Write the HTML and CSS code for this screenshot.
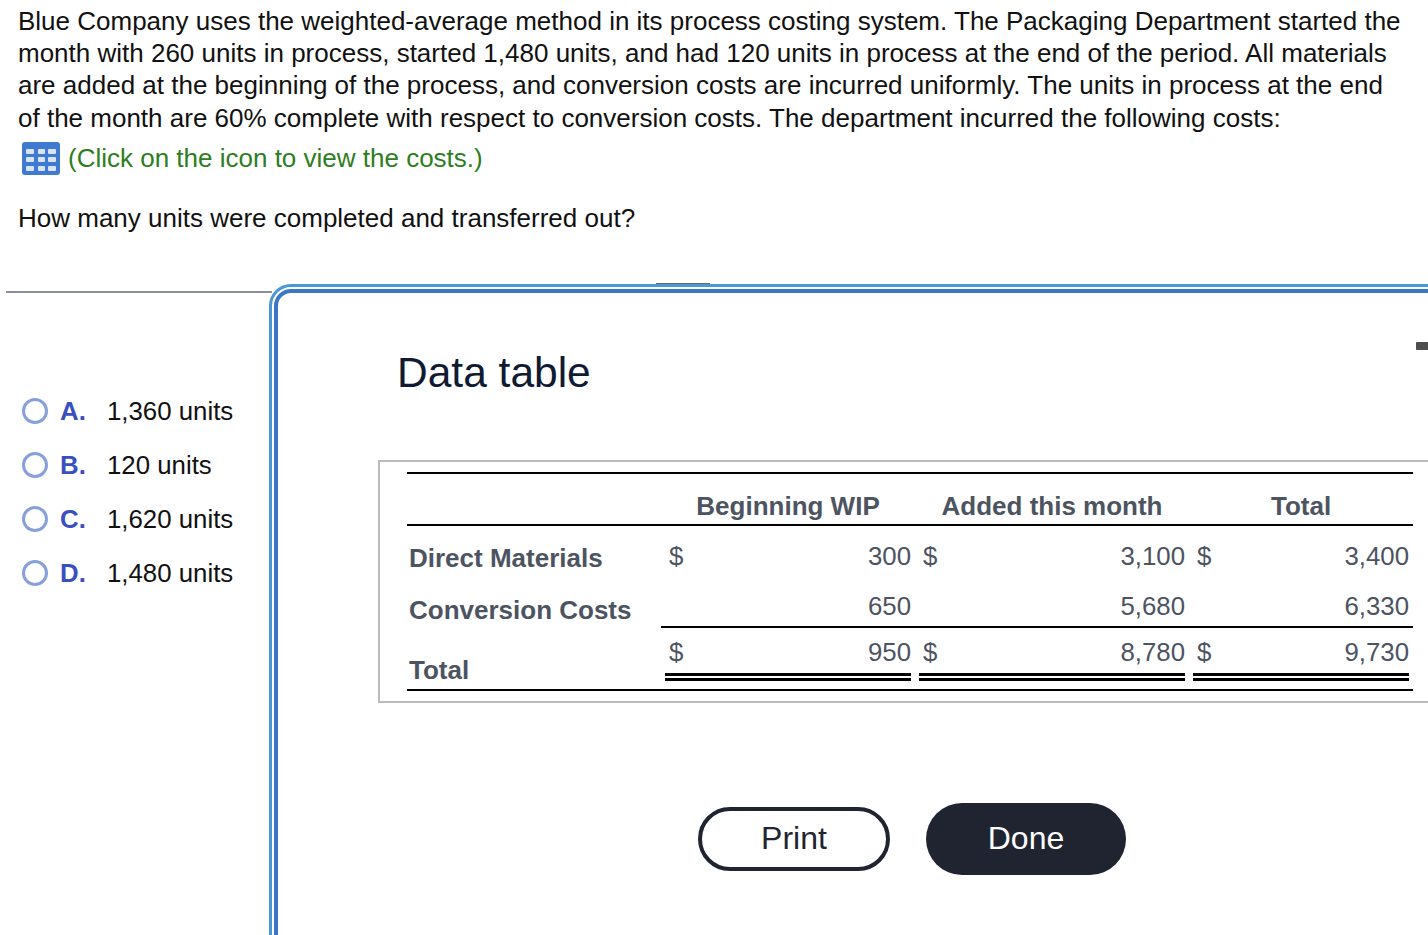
FILE: index.html
```html
<!DOCTYPE html>
<html lang="en">
<head>
    <meta charset="UTF-8">
    <title>Data table</title>
    <link rel="stylesheet" href="styles.css">
</head>
<body>
<div class="question">
    <p class="stem">Blue Company uses the weighted-average method in its process costing system. The Packaging Department started the month with 260 units in process, started 1,480 units, and had 120 units in process at the end of the period. All materials are added at the beginning of the process, and conversion costs are incurred uniformly. The units in process at the end of the month are 60% complete with respect to conversion costs. The department incurred the following costs:</p>
    <div class="costs-link">
        <svg class="grid-icon" width="38" height="33" viewBox="0 0 38 33">
            <rect width="38" height="33" rx="3" fill="#4079d2"/>
            <g fill="#fff" opacity="0.8">
                <rect x="4" y="7" width="8" height="5" rx="1"/><rect x="16" y="7" width="7" height="5" rx="1"/><rect x="26" y="7" width="8" height="5" rx="1"/>
                <rect x="4" y="15" width="8" height="5" rx="1"/><rect x="16" y="15" width="7" height="5" rx="1"/><rect x="26" y="15" width="8" height="5" rx="1"/>
                <rect x="4" y="24" width="8" height="5" rx="1"/><rect x="16" y="24" width="7" height="5" rx="1"/><rect x="26" y="24" width="8" height="5" rx="1"/>
            </g>
        </svg>
        <span>(Click on the icon to view the costs.)</span>
    </div>
    <p class="ask">How many units were completed and transferred out?</p>
</div>
<div class="rule"></div>
<ul class="options">
    <li><i class="radio"></i><b>A.</b><span>1,360 units</span></li>
    <li><i class="radio"></i><b>B.</b><span>120 units</span></li>
    <li><i class="radio"></i><b>C.</b><span>1,620 units</span></li>
    <li><i class="radio"></i><b>D.</b><span>1,480 units</span></li>
</ul>

<div class="tab"></div>
<div class="modal">
    <div class="modal-inner">
        <div class="close"></div>
        <h1>Data table</h1>
        <div class="table-box">
            <table>
                <colgroup>
                    <col class="c-label"><col class="c-dollar"><col class="c-begin"><col class="c-dollar"><col class="c-added"><col class="c-dollar"><col class="c-total">
                </colgroup>
                <tr class="head">
                    <th></th>
                    <th colspan="2">Beginning WIP</th>
                    <th colspan="2">Added this month</th>
                    <th colspan="2">Total</th>
                </tr>
                <tr class="r1">
                    <th>Direct Materials</th>
                    <td class="dollar">$</td><td class="amount">300</td>
                    <td class="dollar">$</td><td class="amount">3,100</td>
                    <td class="dollar">$</td><td class="amount">3,400</td>
                </tr>
                <tr class="r2">
                    <th>Conversion Costs</th>
                    <td class="dollar"></td><td class="amount">650</td>
                    <td class="dollar"></td><td class="amount">5,680</td>
                    <td class="dollar"></td><td class="amount">6,330</td>
                </tr>
                <tr class="r3">
                    <th>Total</th>
                    <td class="dollar"><div class="dbl">$</div></td><td class="amount"><div class="dbl">950</div></td>
                    <td class="dollar"><div class="dbl">$</div></td><td class="amount"><div class="dbl">8,780</div></td>
                    <td class="dollar"><div class="dbl">$</div></td><td class="amount"><div class="dbl">9,730</div></td>
                </tr>
            </table>
        </div>
        <div class="buttons">
            <button class="btn-print">Print</button>
            <button class="btn-done">Done</button>
        </div>
    </div>
</div>
</body>
</html>
```

FILE: styles.css
```css
*{
    padding: 0;
    margin: 0;
    box-sizing: border-box;
}
html,body{
    height: 935px;
    overflow: hidden;
}
body{
    font-family: "Liberation Sans", Arial, sans-serif;
    font-size: 26px;
    color: #111;
    background: #fff;
    position: relative;
}
li{
    list-style: none;
}
.question{
    padding: 4.6px 18px 0;
    height: 291px;
}
.stem{
    line-height: 32.4px;
}
.costs-link{
    display: flex;
    align-items: center;
    gap: 8px;
    margin: 8px 0 0 4px;
    height: 33px;
    color: #2e7d1e;
}
.costs-link span{
    margin-bottom: 1px;
}
.ask{
    margin-top: 27px;
    line-height: 32px;
}
.rule{
    height: 2px;
    margin-left: 6px;
    width: 266px;
    background: #8a8fa0;
}
.options{
    padding: 91px 0 0 22px;
    font-size: 25.8px;
}
.options li{
    display: flex;
    align-items: center;
    height: 54px;
}
.radio{
    width: 26px;
    height: 26px;
    border: 3px solid #87a0dc;
    border-radius: 50%;
    margin-right: 12px;
}
.options b{
    width: 47px;
    color: #3a50c0;
}
/* dialog sits over the page and runs off the window */
.tab{
    position: absolute;
    left: 656px;
    top: 283px;
    width: 54px;
    height: 2px;
    background: #666;
}
.modal{
    position: absolute;
    left: 269px;
    top: 284px;
    width: 1179px;
    height: 671px;
    border: 3px solid #4a98d8;
    border-radius: 22px 0 0 0;
    padding: 2px;
    background: #fff;
}
.modal-inner{
    height: 100%;
    border: 4px solid #3a78c4;
    border-radius: 17px 0 0 0;
    padding: 53px 0 0 119px;
    position: relative;
}
.close{
    position: absolute;
    left: 1138px;
    top: 49px;
    width: 14px;
    height: 8px;
    background: #4d4d4d;
    border-radius: 1px;
}
h1{
    font-size: 42.5px;
    font-weight: normal;
    line-height: 54px;
    color: #0f1a33;
}
.table-box{
    margin: 60px 0 0 -19px;
    width: 1100px;
    height: 243px;
    border: 2px solid #bbb;
    padding: 10px 0 0 27px;
}
table{
    border-collapse: collapse;
    table-layout: fixed;
    width: 1006px;
    color: #4d5461;
}
.c-label{ width: 254px; }
.c-dollar{ width: 30px; }
.c-begin{ width: 224px; }
.c-added{ width: 244px; }
.c-total{ width: 194px; }
th{
    font-weight: bold;
    text-align: left;
    padding-left: 2px;
}
.head th{
    text-align: center;
    padding: 14px 0 0;
    height: 52px;
    border-top: 2px solid #000;
    border-bottom: 2px solid #000;
}
td{
    vertical-align: top;
    font-size: 25.8px;
}
.dollar{
    padding-left: 8px;
}
.amount{
    text-align: right;
    padding-right: 4px;
}
.r1 th,.r1 td{
    height: 52px;
}
.r1 td{
    padding-top: 16px;
}
.r1 th{
    padding-top: 14px;
}
.r2 th,.r2 td{
    height: 50px;
}
.r2 td{
    border-bottom: 2px solid #000;
    padding-top: 15px;
}
.r2 th{
    padding-top: 16px;
}
.r3 th,.r3 td{
    height: 63px;
    border-bottom: 2px solid #000;
}
.r3 th{
    vertical-align: bottom;
    padding-bottom: 3px;
}
.r3 td{
    padding-top: 10px;
}
.dollar .dbl{
    margin-left: -4px;
    padding-left: 4px;
}
.dbl{
    border-bottom: 8px double #000;
    height: 43px;
}
.buttons{
    display: flex;
    align-items: center;
    gap: 36px;
    margin: 100px 0 0 301px;
}
button{
    font-family: "Liberation Sans", Arial, sans-serif;
    font-size: 32px;
    border-radius: 36px;
    color: #1f2430;
    background: #fff;
    padding-bottom: 2px;
}
.btn-print{
    width: 192px;
    height: 64px;
    border: 4px solid #1f2430;
}
.btn-done{
    width: 200px;
    height: 72px;
    border: 0;
    background: #1f2430;
    color: #fff;
}
```
